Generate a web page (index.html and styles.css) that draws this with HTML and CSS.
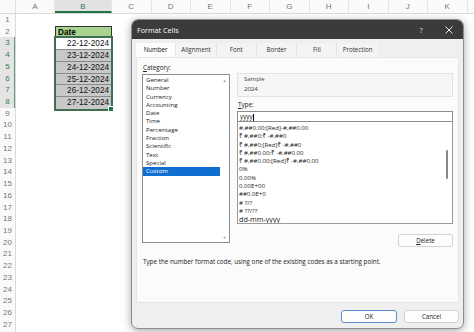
FILE: index.html
```html
<!DOCTYPE html>
<html lang="en">
<head>
    <meta charset="UTF-8">
    <meta name="viewport" content="width=device-width, initial-scale=1.0">
    <title>Format Cells</title>
    <link rel="stylesheet" href="styles.css">
</head>
<body>
    <div class="sheet">
        <div class="col-heads">
            <div class="corner"></div>
            <div class="ch col-a">A</div>
            <div class="ch col-b active">B</div>
            <div class="ch">C</div>
            <div class="ch">D</div>
            <div class="ch">E</div>
            <div class="ch">F</div>
            <div class="ch">G</div>
            <div class="ch">H</div>
            <div class="ch">I</div>
            <div class="ch">J</div>
            <div class="ch">K</div>
        </div>
        <div class="sheet-body">
            <div class="row-heads">
                <div class="rh">1</div>
                <div class="rh">2</div>
                <div class="rh sel">3</div>
                <div class="rh sel">4</div>
                <div class="rh sel">5</div>
                <div class="rh sel">6</div>
                <div class="rh sel">7</div>
                <div class="rh sel">8</div>
                <div class="rh">9</div>
                <div class="rh">10</div>
                <div class="rh">11</div>
                <div class="rh">12</div>
                <div class="rh">13</div>
                <div class="rh">14</div>
                <div class="rh">15</div>
                <div class="rh">16</div>
                <div class="rh">17</div>
                <div class="rh">18</div>
                <div class="rh">19</div>
                <div class="rh">20</div>
                <div class="rh">21</div>
                <div class="rh">22</div>
                <div class="rh">23</div>
                <div class="rh">24</div>
                <div class="rh">25</div>
                <div class="rh">26</div>
                <div class="rh">27</div>
                <div class="rh"></div>
            </div>
            <div class="cells">
                <div class="col-b-cells">
                    <div class="cell head">Date</div>
                    <div class="selection">
                        <div class="cell current">22-12-2024</div>
                        <div class="cell">23-12-2024</div>
                        <div class="cell">24-12-2024</div>
                        <div class="cell">25-12-2024</div>
                        <div class="cell">26-12-2024</div>
                        <div class="cell">27-12-2024</div>
                        <span class="fill-handle"></span>
                    </div>
                </div>
            </div>
        </div>
    </div>

    <div class="dialog">
        <div class="title-bar">
            <span class="title">Format Cells</span>
            <span class="title-btn">?</span>
            <span class="title-btn">
                <svg width="8" height="8" viewBox="0 0 8 8"><path d="M0.5 0.5L7.5 7.5M7.5 0.5L0.5 7.5" stroke="#fff" stroke-width="0.9"/></svg>
            </span>
        </div>
        <div class="dialog-body">
            <div class="tabs">
                <div class="tab active">Number</div>
                <div class="tab">Alignment</div>
                <div class="tab">Font</div>
                <div class="tab">Border</div>
                <div class="tab">Fill</div>
                <div class="tab">Protection</div>
            </div>
            <div class="panel">
                <div class="columns">
                    <div class="left-col">
                        <div class="label"><u>C</u>ategory:</div>
                        <div class="listbox">
                            <div class="items">
                                <div class="item">General</div>
                                <div class="item">Number</div>
                                <div class="item">Currency</div>
                                <div class="item">Accounting</div>
                                <div class="item">Date</div>
                                <div class="item">Time</div>
                                <div class="item">Percentage</div>
                                <div class="item">Fraction</div>
                                <div class="item">Scientific</div>
                                <div class="item">Text</div>
                                <div class="item">Special</div>
                                <div class="item picked">Custom</div>
                            </div>
                            <div class="arrows">
                                <span class="arrow">&#9650;</span>
                                <span class="arrow">&#9660;</span>
                            </div>
                        </div>
                    </div>
                    <div class="right-col">
                        <div class="sample">
                            <div class="sample-label">Sample</div>
                            <div class="sample-value">2024</div>
                        </div>
                        <div class="label type-label"><u>T</u>ype:</div>
                        <div class="type-input">yyyy<span class="caret"></span></div>
                        <div class="format-list">
                            <div class="items">
                                <div class="item">#,##0.00;[Red]-#,##0.00</div>
                                <div class="item">₹ #,##0;₹ -#,##0</div>
                                <div class="item">₹ #,##0;[Red]₹ -#,##0</div>
                                <div class="item">₹ #,##0.00;₹ -#,##0.00</div>
                                <div class="item">₹ #,##0.00;[Red]₹ -#,##0.00</div>
                                <div class="item">0%</div>
                                <div class="item">0.00%</div>
                                <div class="item">0.00E+00</div>
                                <div class="item">##0.0E+0</div>
                                <div class="item"># ?/?</div>
                                <div class="item"># ??/??</div>
                                <div class="item last">dd-mm-yyyy</div>
                            </div>
                            <div class="scroll-track"><span class="thumb"></span></div>
                        </div>
                        <div class="delete-row">
                            <button class="btn"><u>D</u>elete</button>
                        </div>
                    </div>
                </div>
                <p class="hint">Type the number format code, using one of the existing codes as a starting point.</p>
            </div>
            <div class="footer">
                <button class="btn ok">OK</button>
                <button class="btn">Cancel</button>
            </div>
        </div>
    </div>
</body>
</html>
```

FILE: styles.css
```css
body { margin: 0; padding: 0; background-color: #fff; font-family: "Liberation Sans", Arial, sans-serif; overflow: hidden; }

/* spreadsheet */
.sheet { width: 474px; height: 332px; overflow: hidden; }
.col-heads { display: flex; height: 14px; border-bottom: 1px solid #dadada; box-sizing: border-box; background-color: #fafafa; }
.corner { width: 16px; flex: none; border-right: 1px solid #e0e0e0; box-sizing: border-box; }
.ch { width: 39.5px; flex: none; font-size: 8px; color: #777; text-align: center; line-height: 14px; border-right: 1px solid #e6e6e6; box-sizing: border-box; }
.ch.col-a { width: 39px; }
.ch.col-b { width: 57px; }
.ch.active { background-color: #e2e2e2; color: #3d7a57; border-bottom: 2px solid #217346; line-height: 13px; }

.sheet-body { display: flex; }
.row-heads { width: 16px; flex: none; background-color: #fafafa; border-right: 1px solid #dadada; box-sizing: border-box; }
.rh { height: 11.73px; font-size: 8px; line-height: 11.73px; color: #777; text-align: center; }
.rh.sel { background-color: #e4e4e4; color: #3d7a57; box-shadow: inset -1px 0 0 #5f9a77; }

.cells { flex: 1; }
.col-b-cells { margin-left: 39px; margin-top: 11.73px; width: 57px; }
.cell { height: 11.73px; box-sizing: border-box; font-size: 8.2px; line-height: 11px; text-align: right; padding-right: 2px; color: #111; background-color: #c8c8c8; border-bottom: 1px solid #8a8a8a; }
.cell.head { background-color: #a9d48f; text-align: left; font-weight: bold; padding-left: 2px; border: 1px solid #333; color: #000; }
.cell.current { background-color: #fff; }
.selection { position: relative; border: 2px solid #3f6e53; margin: -1px -1px 0 -1px; }
.selection .cell:last-of-type { border-bottom: none; }
.fill-handle { position: absolute; right: -3px; bottom: -3px; width: 4px; height: 4px; background-color: #217346; border: 1px solid #fff; }

/* dialog */
.dialog { position: absolute; left: 131px; top: 19px; width: 333px; height: 310px; border-radius: 7px; background-color: #efefef; border: 1px solid #8d8d8d; box-sizing: border-box; box-shadow: 0 2px 8px rgba(0, 0, 0, 0.35); overflow: hidden; font-family: "Open Sans", "Noto Sans", sans-serif; color: #222; display: flex; flex-direction: column; }
.title-bar { height: 19px; flex: none; background-color: #3b3b3b; display: flex; align-items: center; padding-left: 5px; }
.title { flex: 1; color: #fff; font-size: 7.2px; }
.title-btn { width: 28px; text-align: center; color: #ddd; font-size: 7.5px; display: flex; justify-content: center; align-items: center; }

.dialog-body { flex: 1; display: flex; flex-direction: column; padding: 4px 4px 0 4px; }
.tabs { display: flex; height: 14px; }
.tab { width: 40.3px; font-size: 6.2px; line-height: 14px; text-align: center; background-color: #f4f4f4; border-right: 1px solid #e4e4e4; box-sizing: border-box; color: #333; }
.tab.active { background-color: #fcfcfc; color: #111; }
.tab:last-child { border-right: none; }

.panel { height: 246px; background-color: #fbfbfb; border: 1px solid #e6e6e6; box-sizing: border-box; padding: 0 5px 0 5px; }
.columns { display: flex; gap: 7px; }
.left-col { width: 88px; flex: none; }
.right-col { flex: 1; margin-top: 15px; }
.label { font-size: 6.3px; height: 16px; line-height: 19px; padding-left: 1px; }
.listbox { height: 169px; border: 1px solid #8c8c8c; background-color: #fff; box-sizing: border-box; display: flex; padding-top: 1px; }
.listbox .items { flex: 1; }
.item { height: 8.3px; line-height: 8.3px; font-size: 6.1px; padding-left: 3px; white-space: nowrap; color: #222; }
.item.picked { background-color: #0f6fd0; color: #fff; }
.arrows { width: 9px; display: flex; flex-direction: column; justify-content: space-between; align-items: center; padding: 2px 0; }
.arrow { font-size: 4px; color: #999; }

.sample { height: 24px; border: 1px solid #e2e2e2; background-color: #f6f6f6; box-sizing: border-box; padding-left: 6px; font-size: 6px; }
.sample-label { line-height: 8px; margin-top: 1px; color: #444; }
.sample-value { line-height: 13px; color: #333; }
.type-label { height: 14px; line-height: 15px; }
.type-input { height: 11px; border: 1px solid #8c8c8c; background-color: #fff; box-sizing: border-box; font-size: 6.3px; line-height: 9px; padding-left: 2px; color: #111; }
.caret { display: inline-block; width: 0; height: 7px; border-left: 1px solid #000; vertical-align: middle; margin-left: 0.5px; }
.format-list { height: 102px; border: 1px solid #9a9a9a; border-top: none; background-color: #fff; box-sizing: border-box; display: flex; overflow: hidden; padding-top: 2px; }
.format-list .items { flex: 1; }
.format-list .item { padding-left: 1px; }
.format-list .item.last { font-size: 7.2px; color: #111; }
.scroll-track { width: 9px; position: relative; }
.thumb { position: absolute; left: 3px; top: 26px; width: 2px; height: 29px; background-color: #888; border-radius: 1px; }

.delete-row { display: flex; justify-content: flex-end; margin-top: 10px; }
.btn { font-family: "Open Sans", "Noto Sans", sans-serif; font-size: 6.2px; color: #222; background-color: #fdfdfd; border: 1px solid #d2d2d2; border-radius: 3px; height: 13px; width: 55px; padding: 0; }
.hint { margin: 10px 0 0 1px; font-size: 6.3px; color: #222; white-space: nowrap; }

.footer { display: flex; justify-content: flex-end; gap: 7px; padding-top: 7px; }
.btn.ok { width: 56px; border-color: #5b8ed0; }
```
